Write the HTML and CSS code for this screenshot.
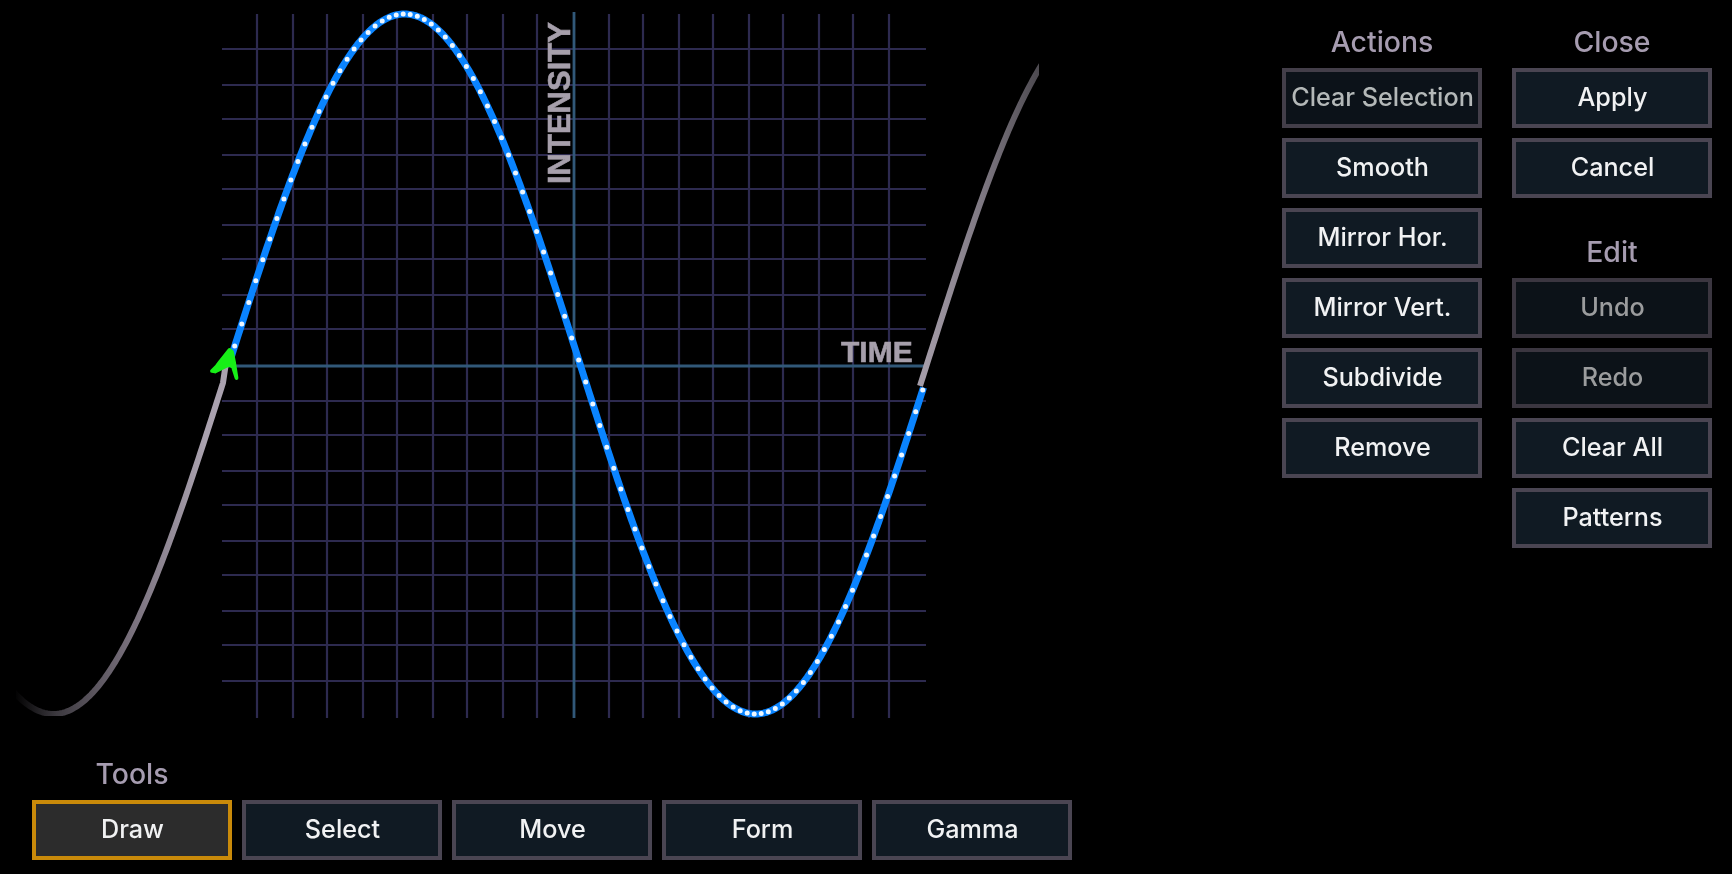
FILE: index.html
```html
<!DOCTYPE html>
<html lang="en">
<head>
<meta charset="utf-8">
<title>Curve Editor</title>
<link rel="stylesheet" href="styles.css">
</head>
<body>
<div class="app">
  <section class="editor">
    <svg class="plot" viewBox="0 0 1100 756" width="1100" height="756" xmlns="http://www.w3.org/2000/svg">
      <defs>
        <linearGradient id="fadeLeft" gradientUnits="userSpaceOnUse" x1="14" y1="0" x2="226" y2="0">
          <stop offset="0" stop-color="#000"/>
          <stop offset="0.2" stop-color="#3c393f"/>
          <stop offset="0.55" stop-color="#78707c"/>
          <stop offset="0.9" stop-color="#aaa2af"/>
          <stop offset="1" stop-color="#aaa2af"/>
        </linearGradient>
        <linearGradient id="fadeRight" gradientUnits="userSpaceOnUse" x1="925" y1="0" x2="1039" y2="0">
          <stop offset="0" stop-color="#a49ca8"/>
          <stop offset="0.5" stop-color="#7e7882"/>
          <stop offset="1" stop-color="#4d4a50"/>
        </linearGradient>
        <clipPath id="plotClip"><rect x="16" y="0" width="1023" height="716"/></clipPath>
      </defs>
      <path class="grid" d="M257 14V718M293 14V718M327 14V718M363 14V718M397 14V718M433 14V718M467 14V718M503 14V718M537 14V718M609 14V718M643 14V718M679 14V718M713 14V718M749 14V718M783 14V718M819 14V718M853 14V718M889 14V718M222 49H926M222 85H926M222 119H926M222 155H926M222 189H926M222 225H926M222 259H926M222 295H926M222 329H926M222 401H926M222 435H926M222 471H926M222 505H926M222 541H926M222 575H926M222 611H926M222 645H926M222 681H926"/>
      <path class="axis" d="M574 12V718M222 366H926"/>
      <g clip-path="url(#plotClip)">
        <path id="tailLeft" class="tail tail-left"/>
        <path id="tailRight" class="tail tail-right"/>
      </g>
      <path id="wave" class="wave"/>
      <path id="dots" class="dots"/>
      <text class="axis-label axis-label-v" transform="translate(570 184) rotate(-90)">INTENSITY</text>
      <text class="axis-label" x="841" y="362">TIME</text>
      <polygon class="cursor" points="229.5,350 232,352 234,362 236.5,378 233,367 230,365 226,366 215,371.5 212,371 217,366 220,362"/>
    </svg>
    <div class="group">
      <h2 class="label label-tools">Tools</h2>
      <div class="tools">
        <button class="btn btn-active">Draw</button>
        <button class="btn">Select</button>
        <button class="btn">Move</button>
        <button class="btn">Form</button>
        <button class="btn">Gamma</button>
      </div>
    </div>
  </section>
  <aside class="panel">
    <div class="col">
      <h2 class="label">Actions</h2>
      <div class="stack">
        <button class="btn btn-dim">Clear Selection</button>
        <button class="btn">Smooth</button>
        <button class="btn">Mirror Hor.</button>
        <button class="btn">Mirror Vert.</button>
        <button class="btn">Subdivide</button>
        <button class="btn">Remove</button>
      </div>
    </div>
    <div class="col">
      <h2 class="label">Close</h2>
      <div class="stack">
        <button class="btn">Apply</button>
        <button class="btn">Cancel</button>
      </div>
      <h2 class="label label-edit">Edit</h2>
      <div class="stack">
        <button class="btn btn-off">Undo</button>
        <button class="btn btn-off">Redo</button>
        <button class="btn">Clear All</button>
        <button class="btn">Patterns</button>
      </div>
    </div>
  </aside>
</div>
<script src="script.js"></script>
</body>
</html>
```

FILE: styles.css
```css
* { box-sizing: border-box; }
html, body { margin: 0; background: #000; }
body { width: 1732px; height: 874px; overflow: hidden; font-family: Inter, "Liberation Sans", sans-serif; }

.app { display: flex; justify-content: space-between; padding-right: 20px; filter: blur(0.6px); }
.editor { display: flex; flex-direction: column; }
.plot { display: block; }

.grid { fill: none; stroke: #2d2a4f; stroke-width: 2.2; }
.axis { fill: none; stroke: #315878; stroke-width: 2.8; }
.tail { fill: none; stroke-width: 6; }
.tail-left { stroke: url(#fadeLeft); }
.tail-right { stroke: url(#fadeRight); }
.wave { fill: none; stroke: #0a84ff; stroke-width: 7; }
.dots { fill: none; stroke: #eef7ff; stroke-width: 5; stroke-linecap: round; }
.cursor { fill: #17f017; stroke: #17f017; stroke-width: 3.8; stroke-linejoin: round; }
.axis-label { font-family: "Liberation Sans", Arial, sans-serif; font-weight: 700; font-size: 30px; fill: #a69fab; stroke: #a69fab; stroke-width: 0.6; }
.axis-label-v { font-size: 31px; }

.group { padding-left: 32px; }
.tools { display: flex; gap: 10px; }
.panel { display: flex; gap: 30px; padding-top: 24px; }
.col { display: flex; flex-direction: column; width: 200px; }
.stack { display: flex; flex-direction: column; gap: 10px; }

.label { margin: 0 0 8px; width: 200px; height: 36px; line-height: 36px; text-align: center; font-size: 28.4px; font-weight: 500; color: #a69cb0; }
.label-edit { margin-top: 36px; }

.btn { width: 200px; height: 60px; padding: 0 0 3px 1px; border: 4px solid #4a4552; background: #101a23; color: #f1f2f3; font: 500 25.2px Inter, "Liberation Sans", sans-serif; text-align: center; }
.btn-active { background: #2c2c2c; border-color: #c98a0a; }
.btn-dim { background: #0c1219; color: #b4b8b8; border-color: #433e49; }
.btn-off { background: #0c1218; color: #9b9c9d; border-color: #3b3640; }
```

FILE: script.js
```js
// Plots the intensity curve: a sine sampled at a fixed time step.
(function () {
  var MID = 364, AMP = 350, PERIOD = 702, STEP = 7.02;

  function sine(x, zero) {
    return MID - AMP * Math.sin(2 * Math.PI * (x - zero) / PERIOD);
  }

  function trace(from, to, zero) {
    var pts = [];
    for (var x = from; x < to; x += 1.5) {
      pts.push(x.toFixed(1) + ' ' + sine(x, zero).toFixed(1));
    }
    pts.push(to.toFixed(1) + ' ' + sine(to, zero).toFixed(1));
    return 'M' + pts.join('L');
  }

  document.getElementById('wave').setAttribute('d', trace(229.5, 923.5, 229));
  document.getElementById('tailLeft').setAttribute('d', trace(10, 223, 229) + 'L225.5 366');
  document.getElementById('tailRight').setAttribute('d', trace(920, 1045, 927));

  var dots = '';
  for (var k = 0; k <= 98; k++) {
    var x = 922.7 - k * STEP;
    var y = sine(x, 229);
    dots += 'M' + x.toFixed(1) + ' ' + y.toFixed(1) + 'h0.01';
  }
  document.getElementById('dots').setAttribute('d', dots);
})();
```
